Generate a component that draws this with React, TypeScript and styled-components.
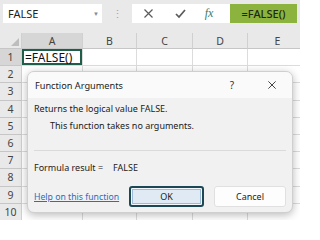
import React from 'react'
import styled, { createGlobalStyle } from 'styled-components'

const GlobalStyle = createGlobalStyle`
  html, body {
    margin: 0;
    padding: 0;
  }
  body {
    width: 300px;
    height: 220px;
    overflow: hidden;
    background: #ffffff;
    font-family: "Noto Sans", "Open Sans", sans-serif;
  }
`

const Screen = styled.div`
  position: relative;
  width: 300px;
  height: 220px;
  overflow: hidden;
  background: #ffffff;
`

/* ---------- formula bar ---------- */

const FormulaBar = styled.div`
  display: flex;
  align-items: flex-start;
  height: 33px;
  box-sizing: border-box;
  padding: 4px 3px 0 3px;
  background: #e9e9e9;
`

const NameBox = styled.div`
  display: flex;
  align-items: center;
  justify-content: space-between;
  width: 99px;
  height: 19px;
  box-sizing: border-box;
  padding: 0 3px 0 5px;
  background: #ffffff;
  font-family: "Noto Sans", sans-serif;
  font-size: 11px;
  color: #222;
`

const Caret = styled.span`
  font-size: 6px;
  color: #8a8a8a;
`

const Grip = styled.div`
  display: flex;
  justify-content: center;
  align-items: center;
  width: 30px;
  height: 19px;
  color: #a5a5a5;
  font-size: 11px;
`

const InputBox = styled.div`
  display: flex;
  align-items: center;
  width: 98px;
  height: 19px;
  background: #ffffff;
`

const IconSlot = styled.div<{ $w: number }>`
  display: flex;
  align-items: center;
  justify-content: center;
  width: ${p => p.$w}px;
  height: 19px;
`

const Fx = styled.span`
  font-family: "Liberation Serif", serif;
  font-style: italic;
  font-size: 12px;
  color: #3f7a63;
`

const GreenEntry = styled.div`
  display: flex;
  align-items: center;
  justify-content: center;
  width: 67px;
  height: 19px;
  background: #8cb33d;
  font-family: "Noto Sans", sans-serif;
  font-weight: 500;
  font-size: 11px;
  color: #1c2a12;
`

/* ---------- sheet ---------- */

const Sheet = styled.div`
  display: grid;
  grid-template-columns: 22px 61px 54px 56px 55px 60px;
  grid-template-rows: 16px repeat(10, 17.2px);
`

const Corner = styled.div`
  position: relative;
  background: #e9e9e9;
  border-right: 1px solid #d0d0d0;
  border-bottom: 1px solid #c6c6c6;
  box-sizing: border-box;
  &::after {
    content: '';
    position: absolute;
    right: 2px;
    bottom: 2px;
    border-left: 8px solid transparent;
    border-bottom: 8px solid #bdbdbd;
  }
`

const Header = styled.div<{ $active?: boolean }>`
  display: flex;
  align-items: center;
  justify-content: center;
  box-sizing: border-box;
  background: ${p => (p.$active ? '#d6d6d6' : '#e9e9e9')};
  border-right: 1px solid #d0d0d0;
  border-bottom: 1px solid #c6c6c6;
  font-family: "Noto Sans", sans-serif;
  font-size: 10.5px;
  color: #444;
`

const Cell = styled.div<{ $selected?: boolean }>`
  display: flex;
  align-items: center;
  box-sizing: border-box;
  padding-left: 3px;
  border-right: 1px solid #dcdcdc;
  border-bottom: 1px solid #dcdcdc;
  box-shadow: ${p => (p.$selected ? 'inset 0 0 0 2px #1f5f4a' : 'none')};
  font-family: "Noto Sans", sans-serif;
  font-size: 12px;
  color: #111;
`

/* ---------- dialog ---------- */

const Dialog = styled.div`
  position: absolute;
  left: 27px;
  top: 71px;
  width: 266px;
  height: 142px;
  box-sizing: border-box;
  border: 1px solid #cfcfcf;
  border-radius: 7px;
  background: #f1f1f1;
  box-shadow: 0 2px 8px rgba(0, 0, 0, 0.28);
  overflow: hidden;
  font-family: "Noto Sans", sans-serif;
  color: #1b1b1b;
  display: flex;
  flex-direction: column;
`

const TitleBar = styled.div`
  display: flex;
  align-items: center;
  height: 26px;
  background: #fafafa;
  padding-left: 7px;
  font-size: 9.2px;
`

const TitleText = styled.span`
  flex: 1;
`

const TitleButton = styled.span`
  display: flex;
  align-items: center;
  justify-content: center;
  width: 40px;
  height: 26px;
  color: #333;
  font-size: 10px;
`

const Body = styled.div`
  display: flex;
  flex-direction: column;
  flex: 1;
`

const Line = styled.div<{ $indent?: number; $top: number }>`
  height: 14px;
  line-height: 14px;
  margin-top: ${p => p.$top}px;
  padding-left: ${p => 6 + (p.$indent ?? 0)}px;
  font-size: 9px;
  white-space: nowrap;
`

const Rule = styled.div`
  height: 1px;
  margin: 17px 6px 0 6px;
  background: #dadada;
`

const ResultValue = styled.span`
  margin-left: 10px;
`

const Footer = styled.div`
  display: flex;
  align-items: center;
  margin-top: 11px;
  padding: 0 6px;
  height: 21px;
`

const HelpLink = styled.a`
  flex: 1;
  font-size: 8.7px;
  color: #2d6cc0;
  text-decoration: underline;
`

const Button = styled.button<{ $primary?: boolean }>`
  width: ${p => (p.$primary ? 75 : 72)}px;
  height: 21px;
  margin-left: ${p => (p.$primary ? 0 : 10)}px;
  box-sizing: border-box;
  border-radius: 3px;
  border: ${p => (p.$primary ? '2px solid #1c4856' : '1px solid #e0e0e0')};
  background: ${p => (p.$primary ? '#dfeaf5' : '#fdfdfd')};
  box-shadow: ${p => (p.$primary ? 'inset 0 0 0 1px #f4f8fc, inset 0 0 0 2px #9dbbd6' : 'none')};
  font-family: "Noto Sans", sans-serif;
  font-size: 9px;
  color: #1b1b1b;
  padding: 0;
`

const columns = ['A', 'B', 'C', 'D', 'E']
const rows = [1, 2, 3, 4, 5, 6, 7, 8, 9, 10]

const CrossIcon = ({ size = 11, color = '#5a5a5a', weight = 1.2 }) => (
  <svg width={size} height={size} viewBox="0 0 11 11">
    <path d="M1.5 1.5 L9.5 9.5 M9.5 1.5 L1.5 9.5" stroke={color} strokeWidth={weight} fill="none" />
  </svg>
)

const CheckIcon = () => (
  <svg width="11" height="11" viewBox="0 0 11 11">
    <path d="M1 6 L4 9 L10 2" stroke="#5a5a5a" strokeWidth="1.7" fill="none" />
  </svg>
)

export default function App() {
  return (
    <Screen>
      <GlobalStyle />
      <FormulaBar>
        <NameBox>
          FALSE
          <Caret>▼</Caret>
        </NameBox>
        <Grip>⋮</Grip>
        <InputBox>
          <IconSlot $w={32}>
            <CrossIcon />
          </IconSlot>
          <IconSlot $w={32}>
            <CheckIcon />
          </IconSlot>
          <IconSlot $w={26}>
            <Fx>fx</Fx>
          </IconSlot>
        </InputBox>
        <GreenEntry>=FALSE()</GreenEntry>
      </FormulaBar>

      <Sheet>
        <Corner />
        {columns.map(c => (
          <Header key={c} $active={c === 'A'}>
            {c}
          </Header>
        ))}
        {rows.map(r => (
          <React.Fragment key={r}>
            <Header $active={r === 1}>{r}</Header>
            {columns.map(c => (
              <Cell key={c} $selected={r === 1 && c === 'A'}>
                {r === 1 && c === 'A' ? '=FALSE()' : ''}
              </Cell>
            ))}
          </React.Fragment>
        ))}
      </Sheet>

      <Dialog>
        <TitleBar>
          <TitleText>Function Arguments</TitleText>
          <TitleButton>?</TitleButton>
          <TitleButton>
            <CrossIcon size={10} color="#333" weight={1} />
          </TitleButton>
        </TitleBar>
        <Body>
          <Line $top={4}>Returns the logical value FALSE.</Line>
          <Line $top={3} $indent={16}>
            This function takes no arguments.
          </Line>
          <Rule />
          <Line $top={10}>
            Formula result =<ResultValue>FALSE</ResultValue>
          </Line>
          <Footer>
            <HelpLink>Help on this function</HelpLink>
            <Button $primary>OK</Button>
            <Button>Cancel</Button>
          </Footer>
        </Body>
      </Dialog>
    </Screen>
  )
}
